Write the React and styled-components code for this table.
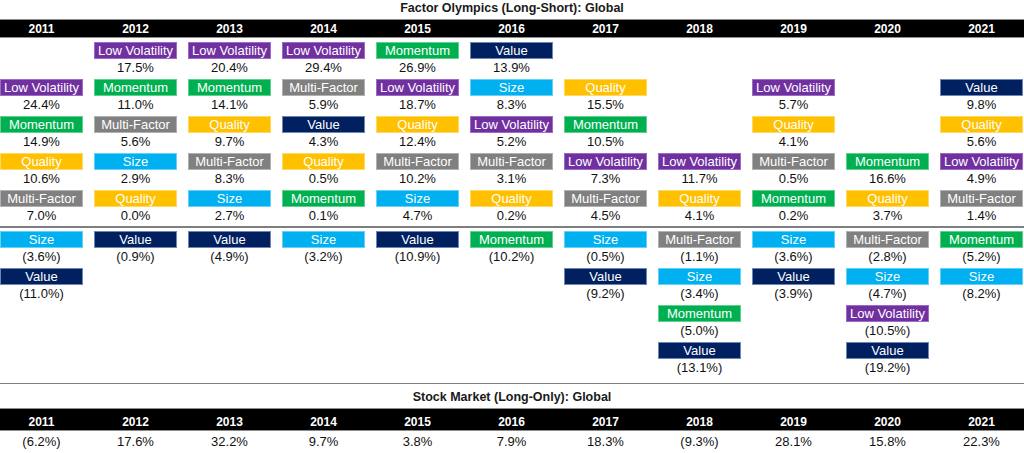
import React from 'react';
import styled, { createGlobalStyle } from 'styled-components';

const GlobalStyle = createGlobalStyle`
  html, body {
    margin: 0;
    padding: 0;
    background: #fff;
  }
  body {
    font-family: "Liberation Sans", Arial, sans-serif;
  }
`

const FACTORS = {
  'Low Volatility': { bg: '#7030a0', edge: '#9b6cc4' },
  'Momentum': { bg: '#00b050', edge: '#5fd08f' },
  'Multi-Factor': { bg: '#808080', edge: '#b0b0b0' },
  'Quality': { bg: '#ffc000', edge: '#ffd966' },
  'Size': { bg: '#00b0f0', edge: '#66d0f6' },
  'Value': { bg: '#002060', edge: '#6f86b4' },
};

const YEARS = [2011, 2012, 2013, 2014, 2015, 2016, 2017, 2018, 2019, 2020, 2021];

const POSITIVE = [
  [['Low Volatility', '24.4%'], ['Momentum', '14.9%'], ['Quality', '10.6%'], ['Multi-Factor', '7.0%']],
  [['Low Volatility', '17.5%'], ['Momentum', '11.0%'], ['Multi-Factor', '5.6%'], ['Size', '2.9%'], ['Quality', '0.0%']],
  [['Low Volatility', '20.4%'], ['Momentum', '14.1%'], ['Quality', '9.7%'], ['Multi-Factor', '8.3%'], ['Size', '2.7%']],
  [['Low Volatility', '29.4%'], ['Multi-Factor', '5.9%'], ['Value', '4.3%'], ['Quality', '0.5%'], ['Momentum', '0.1%']],
  [['Momentum', '26.9%'], ['Low Volatility', '18.7%'], ['Quality', '12.4%'], ['Multi-Factor', '10.2%'], ['Size', '4.7%']],
  [['Value', '13.9%'], ['Size', '8.3%'], ['Low Volatility', '5.2%'], ['Multi-Factor', '3.1%'], ['Quality', '0.2%']],
  [['Quality', '15.5%'], ['Momentum', '10.5%'], ['Low Volatility', '7.3%'], ['Multi-Factor', '4.5%']],
  [['Low Volatility', '11.7%'], ['Quality', '4.1%']],
  [['Low Volatility', '5.7%'], ['Quality', '4.1%'], ['Multi-Factor', '0.5%'], ['Momentum', '0.2%']],
  [['Momentum', '16.6%'], ['Quality', '3.7%']],
  [['Value', '9.8%'], ['Quality', '5.6%'], ['Low Volatility', '4.9%'], ['Multi-Factor', '1.4%']],
];

const NEGATIVE = [
  [['Size', '(3.6%)'], ['Value', '(11.0%)']],
  [['Value', '(0.9%)']],
  [['Value', '(4.9%)']],
  [['Size', '(3.2%)']],
  [['Value', '(10.9%)']],
  [['Momentum', '(10.2%)']],
  [['Size', '(0.5%)'], ['Value', '(9.2%)']],
  [['Multi-Factor', '(1.1%)'], ['Size', '(3.4%)'], ['Momentum', '(5.0%)'], ['Value', '(13.1%)']],
  [['Size', '(3.6%)'], ['Value', '(3.9%)']],
  [['Multi-Factor', '(2.8%)'], ['Size', '(4.7%)'], ['Low Volatility', '(10.5%)'], ['Value', '(19.2%)']],
  [['Momentum', '(5.2%)'], ['Size', '(8.2%)']],
];

const MARKET = ['(6.2%)', '17.6%', '32.2%', '9.7%', '3.8%', '7.9%', '18.3%', '(9.3%)', '28.1%', '15.8%', '22.3%'];

function Cell({ name, value }) {
  const f = FACTORS[name];
  return (
    <CellBox>
      <Label bg={f.bg} edge={f.edge}>{name}</Label>
      <Value>{value}</Value>
    </CellBox>
  );
}

function App() {
  return (
    <Page>
      <GlobalStyle />
      <Title>Factor Olympics (Long-Short): Global</Title>
      <YearBar>
        {YEARS.map(y => <Year key={y}>{y}</Year>)}
      </YearBar>
      <Section gapTop={4} height={185}>
        {POSITIVE.map((col, i) => (
          <Column key={i} align="flex-end">
            {col.map(([n, v]) => <Cell key={n} name={n} value={v} />)}
          </Column>
        ))}
      </Section>
      <Rule thick />
      <Section gapTop={3} height={148}>
        {NEGATIVE.map((col, i) => (
          <Column key={i} align="flex-start">
            {col.map(([n, v]) => <Cell key={n} name={n} value={v} />)}
          </Column>
        ))}
      </Section>
      <Rule />
      <SubTitle>Stock Market (Long-Only): Global</SubTitle>
      <YearBar tall>
        {YEARS.map(y => <Year key={y}>{y}</Year>)}
      </YearBar>
      <MarketRow>
        {MARKET.map((m, i) => <MarketValue key={i}>{m}</MarketValue>)}
      </MarketRow>
    </Page>
  );
}

const Page = styled.div`
  width: 1024px;
  height: 453px;
  overflow: hidden;
  background: #fff;
  color: #000;
`

const Grid = styled.div`
  display: grid;
  grid-template-columns: repeat(11, 83px);
  column-gap: 11px;
`

const Title = styled.div`
  height: 19px;
  line-height: 17px;
  text-align: center;
  font-weight: bold;
  font-size: 12.5px;
  color: #1a1a1a;
`

const YearBar = styled(Grid)`
  background: #000;
  border-top: 1px solid #8c8c8c;
  border-bottom: 1px solid #8c8c8c;
  height: ${p => (p.tall ? 20 : 17)}px;
  align-items: ${p => (p.tall ? 'end' : 'center')};
  padding-bottom: ${p => (p.tall ? 1 : 0)}px;
`

const Year = styled.div`
  color: #fff;
  font-weight: bold;
  font-size: 12px;
  line-height: 14px;
  text-align: center;
`

const Section = styled(Grid)`
  height: ${p => p.height}px;
  margin-top: ${p => p.gapTop}px;
`

const Column = styled.div`
  display: flex;
  flex-direction: column;
  justify-content: ${p => p.align};
`

const CellBox = styled.div`
  height: 37px;
  display: flex;
  flex-direction: column;
`

const Label = styled.div`
  height: 17px;
  box-sizing: border-box;
  background: ${p => p.bg};
  border: 1px solid ${p => p.edge};
  color: #fff;
  font-size: 13px;
  line-height: 15px;
  text-align: center;
  white-space: nowrap;
`

const Value = styled.div`
  font-size: 13px;
  line-height: 17px;
  text-align: center;
  color: #111;
`

const Rule = styled.div`
  height: ${p => (p.thick ? 2 : 1)}px;
  background: #7f7f7f;
  margin-top: ${p => (p.thick ? -1 : 4)}px;
  margin-bottom: ${p => (p.thick ? 1 : 0)}px;
`

const SubTitle = styled(Title)`
  height: 24px;
  line-height: 26px;
`

const MarketRow = styled(Grid)`
  height: 20px;
  align-items: center;
`

const MarketValue = styled.div`
  font-size: 13px;
  text-align: center;
  color: #111;
`

export default App;
